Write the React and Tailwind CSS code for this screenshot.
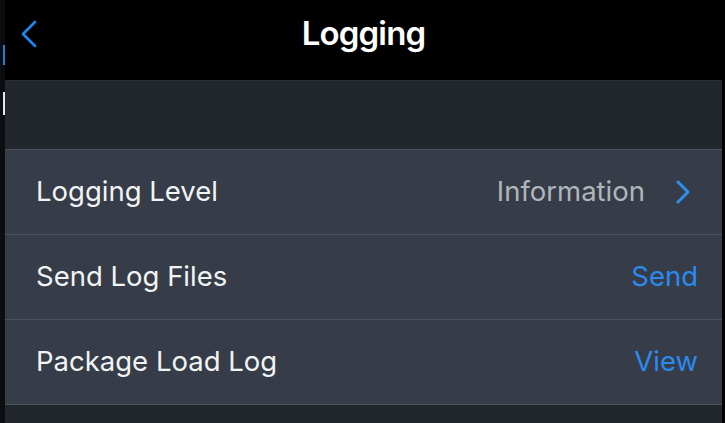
import React from 'react';

const rows = [
    { label: 'Logging Level', value: 'Information', chevron: true },
    { label: 'Send Log Files', action: 'Send' },
    { label: 'Package Load Log', action: 'View' },
];

const App = () => {
    return (
        <div
            className="flex w-[725px] h-[423px] overflow-hidden bg-black"
            style={{ fontFamily: 'Inter, "Noto Sans", sans-serif' }}
        >
            {/* left edge strip */}
            <div className="w-[5px] bg-[#0b0d10] flex flex-col">
                <div className="h-[45px]" />
                <div className="ml-[3px] w-[2px] h-[20px] bg-[#1e7fd6]" />
                <div className="h-[27px]" />
                <div className="ml-[3px] w-[2px] h-[23px] bg-[#e6e6e6]" />
            </div>

            <div className="flex-1 flex flex-col">
                {/* header */}
                <div className="relative h-[81px] bg-black flex items-start justify-center border-b border-[#2a2e35]">
                    <svg
                        className="absolute left-[14px] top-[20px]"
                        width="22"
                        height="30"
                        viewBox="0 0 22 30"
                        fill="none"
                    >
                        <path d="M16 2 L4 14 L16 26" stroke="#1f84f0" strokeWidth="2.8" strokeLinecap="round" strokeLinejoin="round" />
                    </svg>
                    <h1 className="mt-[11px] text-[33px] leading-[44px] font-semibold text-white tracking-tight">Logging</h1>
                </div>

                {/* spacer band */}
                <div className="h-[68px] bg-[#22272e]" />

                {rows.map((row) => (
                    <div
                        key={row.label}
                        className="h-[85px] bg-[#363d48] border-t border-[#4b525c] flex items-center pl-[31px] pr-[24px]"
                    >
                        <span className="text-[27.5px] text-[#f2f3f5] flex-1">{row.label}</span>
                        {row.value && (
                            <span className="text-[27.5px] text-[#b1b5bb] mr-[30px]">{row.value}</span>
                        )}
                        {row.chevron && (
                            <svg width="16" height="26" viewBox="0 0 16 26" fill="none" className="mr-[7px]">
                                <path d="M3 3 L13 13 L3 23" stroke="#2f8ff0" strokeWidth="3" strokeLinecap="round" strokeLinejoin="round" />
                            </svg>
                        )}
                        {row.action && (
                            <span className="text-[27.5px] text-[#2b8af0]">{row.action}</span>
                        )}
                    </div>
                ))}

                <div className="flex-1 bg-[#22272e] border-t border-[#4b525c]" />
            </div>

            {/* right edge strip */}
            <div className="w-[3px] bg-black" />
        </div>
    );
};

export default App;
